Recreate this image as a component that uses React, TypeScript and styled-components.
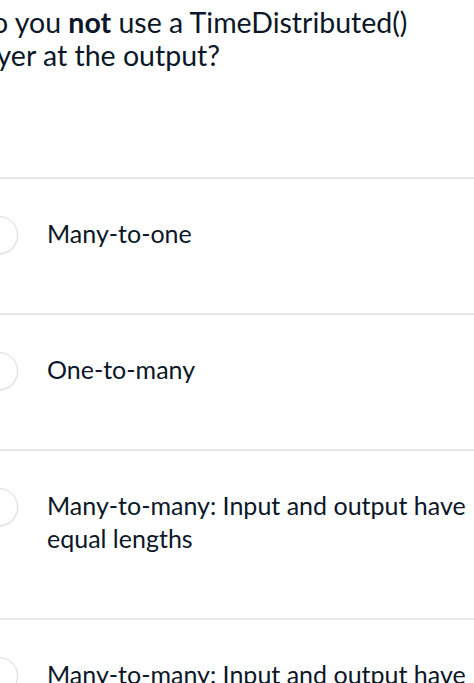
import React from "react";
import styled, { createGlobalStyle } from "styled-components";

const Global = createGlobalStyle`
  html, body { margin: 0; padding: 0; background: #ffffff; }
  body { overflow: hidden; }
`;

const Page = styled.div`
  width: 474px;
  height: 683px;
  overflow: hidden;
  font-family: Lato, "Noto Sans", sans-serif;
  color: #0b1728;
  background: #fff;
`;

const Question = styled.div`
  margin-left: -24px;
  padding-top: 6px;
  font-size: 28.5px;
  line-height: 33px;
  height: 177px;
  box-sizing: border-box;
  white-space: nowrap;
  b { font-weight: 700; }
`;

const Options = styled.div`
  display: flex;
  flex-direction: column;
`;

const Option = styled.div`
  display: flex;
  align-items: flex-start;
  gap: 29px;
  border-top: 2px solid #e7e7e7;
  padding: 38px 0 63px;
`;

const Radio = styled.span`
  flex: none;
  box-sizing: border-box;
  width: 38px;
  height: 38px;
  margin: -1px 0 -4px -20px;
  border-radius: 50%;
  border: 1px solid #dcdcdc;
  background: #fff;
  box-shadow: 0 1px 2px rgba(0, 0, 0, 0.08);
`;

const Label = styled.span`
  font-size: 25px;
  line-height: 33px;
`;

const options = [
  "Many-to-one",
  "One-to-many",
  "Many-to-many: Input and output have equal lengths",
  "Many-to-many: Input and output have different lengths",
];

export default function App() {
  return (
    <Page>
      <Global />
      <Question>
        do you <b>not</b> use a TimeDistributed()
        <br />
        layer at the output?
      </Question>
      <Options>
        {options.map((o) => (
          <Option key={o}>
            <Radio />
            <Label>{o}</Label>
          </Option>
        ))}
      </Options>
    </Page>
  );
}
